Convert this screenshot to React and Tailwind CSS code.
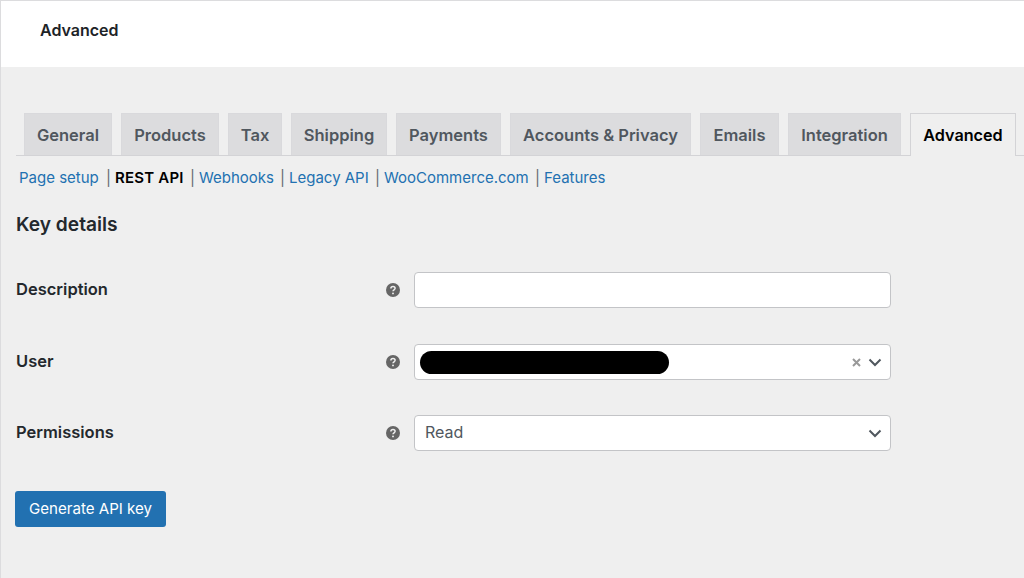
import React from 'react';

const tabs = [
  { name: 'General', w: 'w-[88px]' },
  { name: 'Products', w: 'w-[98px]' },
  { name: 'Tax', w: 'w-[54px]' },
  { name: 'Shipping', w: 'w-[96px]' },
  { name: 'Payments', w: 'w-[105px]' },
  { name: 'Accounts & Privacy', w: 'w-[181px]' },
  { name: 'Emails', w: 'w-[79px]' },
  { name: 'Integration', w: 'w-[113px]' },
];

const links = [
  { name: 'Page setup', w: 'w-[87px]' },
  { name: 'REST API', w: 'w-[84px]', active: true },
  { name: 'Webhooks', w: 'w-[90px]' },
  { name: 'Legacy API', w: 'w-[95px]' },
  { name: 'WooCommerce.com', w: 'w-[160px]' },
  { name: 'Features', w: 'w-[70px]' },
];

const Help = () => (
  <svg width="14" height="14" viewBox="0 0 14 14" className="shrink-0">
    <circle cx="7" cy="7" r="7" fill="#666666" />
    <path d="M4.900 5.400c0-1.200 1-1.900 2.100-1.900s2.100.7 2.100 1.800c0 1.500-2.100 1.500-2.100 3" fill="none" stroke="#efefef" strokeWidth="1.500" />
    <circle cx="7" cy="10.400" r="0.950" fill="#efefef" />
  </svg>
);

const Chevron = () => (
  <svg width="14" height="9" viewBox="0 0 14 9" className="shrink-0">
    <path d="M1.500 1.500 7 7l5.500-5.500" fill="none" stroke="#50575e" strokeWidth="2" />
  </svg>
);

const Clear = () => (
  <svg width="9" height="9" viewBox="0 0 9 9" className="shrink-0">
    <path d="M1 1l7 7M8 1 1 8" fill="none" stroke="#999999" strokeWidth="2" />
  </svg>
);

const Row = ({ label, className, children }) => (
  <div className={`flex items-center h-9 ${className}`}>
    <div className="w-[370px] text-[16.5px] font-semibold text-[#23282d] -mt-[2px]">{label}</div>
    <div className="w-[28px]"><Help /></div>
    <div className="w-[477px] h-9 bg-white border border-[#c3c4c7] rounded-[4px] flex items-center text-[16px] text-[#50575e]">
      {children}
    </div>
  </div>
);

export default function App() {
  return (
    <div className="w-[1024px] h-[578px] overflow-hidden bg-[#efefef] border-l border-t border-[#dcdcde] font-['Inter',sans-serif]">
      <div className="h-[66px] bg-white flex items-center pl-[39px] pb-[8px] text-[16px] font-semibold text-[#1d2327]">
        Advanced
      </div>

      <div className="mt-[46px] ml-[15px] flex h-[43px] border-b border-[#d3d3d6] pl-[8px] gap-[9px]">
        {tabs.map((tab) => (
          <div
            key={tab.name}
            className={`${tab.w} h-[42px] pt-[1px] bg-[#dcdcde] border border-b-0 border-[#d9d9dc] flex items-center justify-center text-[16.5px] font-semibold text-[#50575e] whitespace-nowrap`}
          >
            {tab.name}
          </div>
        ))}
        <div className="w-[106px] h-[43px] bg-[#efefef] border border-b-0 border-[#d3d3d6] flex items-center justify-center text-[16.2px] font-semibold text-black">
          Advanced
        </div>
      </div>

      <div className="flex items-center mt-[12px] ml-[18px] h-[20px] text-[15px] text-[#2271b1] whitespace-nowrap">
        {links.map((link, i) => (
          <div key={link.name} className={`${link.w} flex`}>
            {i > 0 && <span className="text-[#646970] mr-[4px]">|</span>}
            <span className={link.active ? 'font-semibold text-black tracking-[0.2px]' : ''}>{link.name}</span>
          </div>
        ))}
      </div>

      <h2 className="ml-[15px] mt-[24px] h-[25px] leading-[25px] text-[19.2px] font-semibold text-[#23282d]">Key details</h2>

      <div className="ml-[15px] mt-[35px] flex flex-col">
        <Row label="Description" />
        <Row label="User" className="mt-[36px]">
          <div className="ml-[5px] w-[249px] h-[23px] bg-black rounded-full" />
          <div className="ml-auto flex"><Clear /></div>
          <div className="mr-[8px] ml-[7px] flex"><Chevron /></div>
        </Row>
        <Row label="Permissions" className="mt-[35px]">
          <span className="ml-[10px] -mt-[2px]">Read</span>
          <div className="ml-auto mr-[8px] flex"><Chevron /></div>
        </Row>
      </div>

      <button className="ml-[14px] mt-[40px] w-[151px] h-[36px] pt-[1px] bg-[#2271b1] rounded-[3px] text-[15.1px] text-white">
        Generate API key
      </button>
    </div>
  );
}
